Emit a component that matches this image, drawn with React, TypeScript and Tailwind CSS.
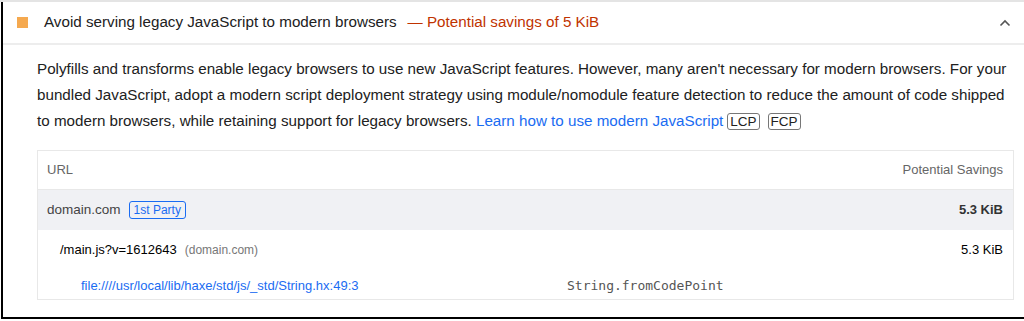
export default function App() {
  return (
    <div className="w-[1024px] h-[321px] bg-white overflow-hidden font-['Liberation_Sans',Arial,sans-serif]">
      <div className="h-[2px] bg-[#e4e4e4]" />
      <div className="ml-px h-[317px] border-l-2 border-b-2 border-black">
        {/* audit header */}
        <div className="h-[43px] flex items-center pl-[14px] pr-[13px] border-b-2 border-[#ededed]">
          <span className="w-[11px] h-[11px] bg-[#f5a94f] shrink-0" />
          <span className="ml-4 text-[15.2px] text-[#212121]">
            Avoid serving legacy JavaScript to modern browsers
          </span>
          <span className="ml-[11px] text-[15.2px] text-[#c03300]">
            — Potential savings of 5 KiB
          </span>
          <svg className="ml-auto" width="12" height="8" viewBox="0 0 12 8">
            <polyline points="1.5,6.5 6,2 10.5,6.5" fill="none" stroke="#555" strokeWidth="1.6" />
          </svg>
        </div>

        {/* description */}
        <p className="mt-[11px] pl-[34px] pr-[8px] text-[15.2px] leading-[26px] text-[#212121]">
          Polyfills and transforms enable legacy browsers to use new JavaScript features. However, many aren't necessary
          for modern browsers. For your bundled JavaScript, adopt a modern script deployment strategy using
          module/nomodule feature detection to reduce the amount of code shipped to modern browsers, while retaining
          support for legacy browsers.{" "}
          <a className="text-[#1a6cf2]">Learn how to use modern JavaScript</a>
          <span className="ml-[4px] inline-block align-middle border border-[#777] rounded-[3px] px-[2px] text-[13.5px] leading-[15px]">
            LCP
          </span>
          <span className="ml-[8px] inline-block align-middle border border-[#777] rounded-[3px] px-[2px] text-[13.5px] leading-[15px]">
            FCP
          </span>
        </p>

        {/* table */}
        <div className="mt-[16px] ml-[34px] mr-[10px] border border-[#e8e8e8] text-[13px]">
          <div className="h-[39px] flex items-center justify-between pl-[9px] pr-[10px] text-[#666] border-b border-[#e8e8e8]">
            <span>URL</span>
            <span>Potential Savings</span>
          </div>
          <div className="h-[40px] flex items-center pl-[9px] pr-[10px] bg-[#f0f1f4]">
            <span className="text-[13.5px] text-[#444]">domain.com</span>
            <span className="ml-[8px] h-[18px] flex items-center border border-[#1a6cf2] rounded-[3px] px-[4px] text-[12px] text-[#1a6cf2]">
              1st Party
            </span>
            <span className="ml-auto font-bold text-[#333]">5.3 KiB</span>
          </div>
          <div className="h-[40px] flex items-center pl-[22px] pr-[10px]">
            <span className="text-black">/main.js?v=1612643</span>
            <span className="ml-[8px] text-[12px] text-[#777]">(domain.com)</span>
            <span className="ml-auto text-black">5.3 KiB</span>
          </div>
          <div className="h-[29px] flex items-start pt-[6px] pl-[43px]">
            <a className="w-[486px] text-[#1a6cf2]">file:////usr/local/lib/haxe/std/js/_std/String.hx:49:3</a>
            <span className="font-['DejaVu_Sans_Mono',monospace] text-[13px] text-[#555]">String.fromCodePoint</span>
          </div>
        </div>
      </div>
    </div>
  );
}
